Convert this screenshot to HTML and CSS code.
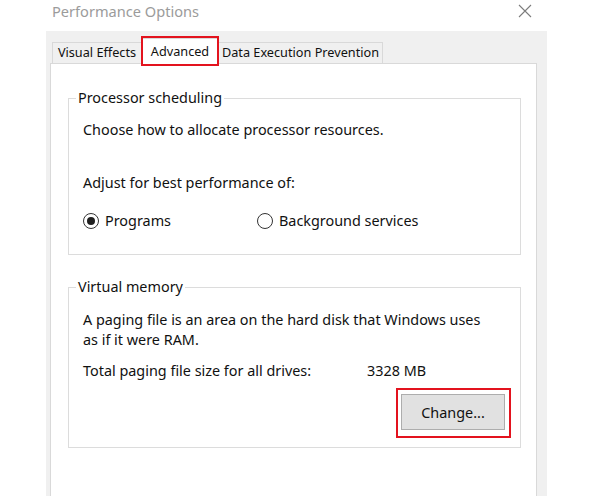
FILE: index.html
```html
<!DOCTYPE html>
<html lang="en">
<head>
<meta charset="utf-8">
<title>Performance Options</title>
<link rel="stylesheet" href="styles.css">
</head>
<body>
<div class="window">
  <div class="titlebar">
    <span class="title">Performance Options</span>
    <svg class="close" width="14" height="14" viewBox="0 0 14 14" aria-hidden="true">
      <path d="M1 1L13 13M13 1L1 13" stroke="#7c7c7c" stroke-width="1.1" fill="none"/>
    </svg>
  </div>
  <div class="client">
    <div class="tabs">
      <div class="tab tab-visual">Visual Effects</div>
      <div class="tab tab-active">Advanced</div>
      <div class="tab tab-dep">Data Execution Prevention</div>
    </div>
    <div class="panel">
      <fieldset class="group group-cpu">
        <legend>Processor scheduling</legend>
        <p class="line cpu-intro">Choose how to allocate processor resources.</p>
        <p class="line cpu-adjust">Adjust for best performance of:</p>
        <div class="radios">
          <label class="radio radio-first checked"><span class="dot"></span>Programs</label>
          <label class="radio"><span class="dot"></span>Background services</label>
        </div>
      </fieldset>
      <fieldset class="group group-vm">
        <legend>Virtual memory</legend>
        <p class="line vm-intro">A paging file is an area on the hard disk that Windows uses<br>as if it were RAM.</p>
        <div class="line total"><span class="total-label">Total paging file size for all drives:</span><span class="total-value">3328 MB</span></div>
        <div class="actions">
          <span class="highlight"><button class="btn" type="button">Change...</button></span>
        </div>
      </fieldset>
    </div>
  </div>
</div>
</body>
</html>
```

FILE: styles.css
```css
html, body {
  margin: 0;
  padding: 0;
}
body {
  width: 600px;
  height: 496px;
  overflow: hidden;
  background: #ffffff;
  font-family: "Noto Sans", "Open Sans", sans-serif;
  color: #111111;
}
.window {
  margin-left: 46px;
  width: 501px;
  height: 496px;
  display: flex;
  flex-direction: column;
}
.titlebar {
  flex: 0 0 31px;
  height: 31px;
  box-sizing: border-box;
  padding: 1px 15px 0 6px;
  display: flex;
  align-items: flex-start;
  justify-content: space-between;
  background: #ffffff;
}
.title {
  font-size: 14.6px;
  line-height: 20px;
  color: #9b9b9b;
}
.close {
  margin-top: 3px;
}
.client {
  flex: 1 1 auto;
  min-height: 0;
  background: #f0f0f0;
  padding: 11px 10px 0 4px;
  display: flex;
  flex-direction: column;
}
.tabs {
  flex: 0 0 21px;
  height: 21px;
  display: flex;
  align-items: flex-end;
  padding-left: 2px;
}
.tab {
  height: 21px;
  box-sizing: border-box;
  border: 1px solid #d9d9d9;
  border-bottom: none;
  background: #f0f0f0;
  font-size: 12.7px;
  line-height: 19px;
  text-align: center;
  white-space: nowrap;
  color: #111111;
}
.tab-visual {
  width: 89px;
  border-right: none;
}
.tab-active {
  position: relative;
  z-index: 1;
  width: 78px;
  height: 26px;
  margin-bottom: -1px;
  padding-top: 3px;
  background: #ffffff;
}
.tab-active::after {
  content: "";
  position: absolute;
  left: -1px;
  right: -1px;
  top: -3px;
  bottom: -2px;
  border: 2px solid #e3131e;
}
.tab-dep {
  width: 164px;
  border-left: none;
}
.panel {
  flex: 1 1 auto;
  min-height: 0;
  box-sizing: border-box;
  background: #ffffff;
  border: 1px solid #d9d9d9;
  border-bottom: none;
  padding: 24px 15px 0 17px;
}
.group {
  margin: 0;
  min-width: 0;
  border: 1px solid #dcdcdc;
  padding: 0 15px 0 14px;
}
.group legend {
  margin-left: -7px;
  padding: 0 2px;
  font-size: 14.4px;
  line-height: 20px;
  color: #111111;
}
.line {
  margin: 0;
  font-size: 14.4px;
  line-height: 20px;
}
.cpu-intro {
  margin-top: 12px;
}
.cpu-adjust {
  margin-top: 33px;
}
.radios {
  margin-top: 18px;
  padding-bottom: 23px;
  display: flex;
  font-size: 14.4px;
  line-height: 20px;
}
.radio {
  display: flex;
  align-items: center;
  gap: 6px;
}
.radio-first {
  width: 174px;
}
.dot {
  width: 16px;
  height: 16px;
  box-sizing: border-box;
  border: 1px solid #333333;
  border-radius: 50%;
  background: #ffffff;
  display: flex;
  align-items: center;
  justify-content: center;
}
.checked .dot::after {
  content: "";
  width: 8px;
  height: 8px;
  border-radius: 50%;
  background: #1f1f1f;
}
.group-vm {
  margin-top: 22px;
}
.vm-intro {
  margin-top: 13px;
}
.total {
  margin-top: 11px;
  display: flex;
}
.total-label {
  width: 284px;
}
.actions {
  margin-top: 13px;
  padding-bottom: 17px;
  display: flex;
  justify-content: flex-end;
}
.highlight {
  position: relative;
  display: flex;
}
.highlight::after {
  content: "";
  position: absolute;
  left: -5px;
  right: -6px;
  top: -6px;
  bottom: -8px;
  border: 2px solid #e3131e;
}
.btn {
  width: 104px;
  height: 36px;
  margin: 0;
  padding: 0;
  box-sizing: border-box;
  border: 1px solid #adadad;
  border-radius: 0;
  background: #e1e1e1;
  font-family: "Noto Sans", "Open Sans", sans-serif;
  font-size: 14.4px;
  color: #111111;
}
```
